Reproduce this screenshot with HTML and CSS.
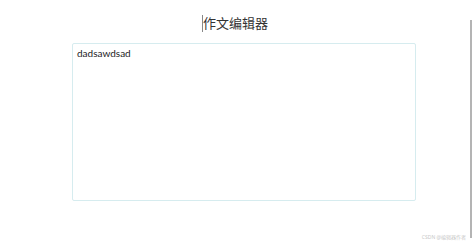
FILE: index.html
```html
<!DOCTYPE html>
<html lang="zh-CN">
<head>
<meta charset="utf-8">
<title>作文编辑器</title>
<link rel="stylesheet" href="styles.css">
</head>
<body>
<main class="page">
  <h1 class="title"><span class="caret"></span>作文编辑器</h1>
  <div class="editor">dadsawdsad</div>
</main>
<div class="scrollbar"></div>
<div class="watermark">CSDN @编辑器作者</div>
</body>
</html>
```
FILE: styles.css
```css
html, body {
  margin: 0;
  padding: 0;
  background: #ffffff;
}
body {
  width: 474px;
  height: 243px;
  overflow: hidden;
  position: relative;
  font-family: Lato, "Noto Sans CJK SC", sans-serif;
}
.page {
  display: flex;
  flex-direction: column;
  align-items: center;
  padding-top: 13px;
}
.title {
  margin: 0 4px 10px 0;
  font-family: "Noto Sans CJK SC", sans-serif;
  font-size: 13px;
  font-weight: 400;
  line-height: 20px;
  color: #333333;
  display: flex;
  align-items: center;
}
.caret {
  display: inline-block;
  width: 1px;
  height: 17px;
  background: #888888;
}
.editor {
  box-sizing: border-box;
  width: 344px;
  height: 158px;
  margin-left: 14px;
  border: 1px solid #d6ecef;
  border-radius: 2px;
  padding: 2px 4px;
  font-family: Lato, sans-serif;
  font-size: 10px;
  line-height: 14px;
  color: #222222;
}
.scrollbar {
  position: absolute;
  left: 470px;
  top: 20px;
  width: 2px;
  height: 218px;
  background: #b4b4b4;
}
.watermark {
  position: absolute;
  right: 8px;
  bottom: 3px;
  font-size: 5px;
  color: #c8c8c8;
  font-family: "Noto Sans", "Noto Sans CJK SC", sans-serif;
}
```
